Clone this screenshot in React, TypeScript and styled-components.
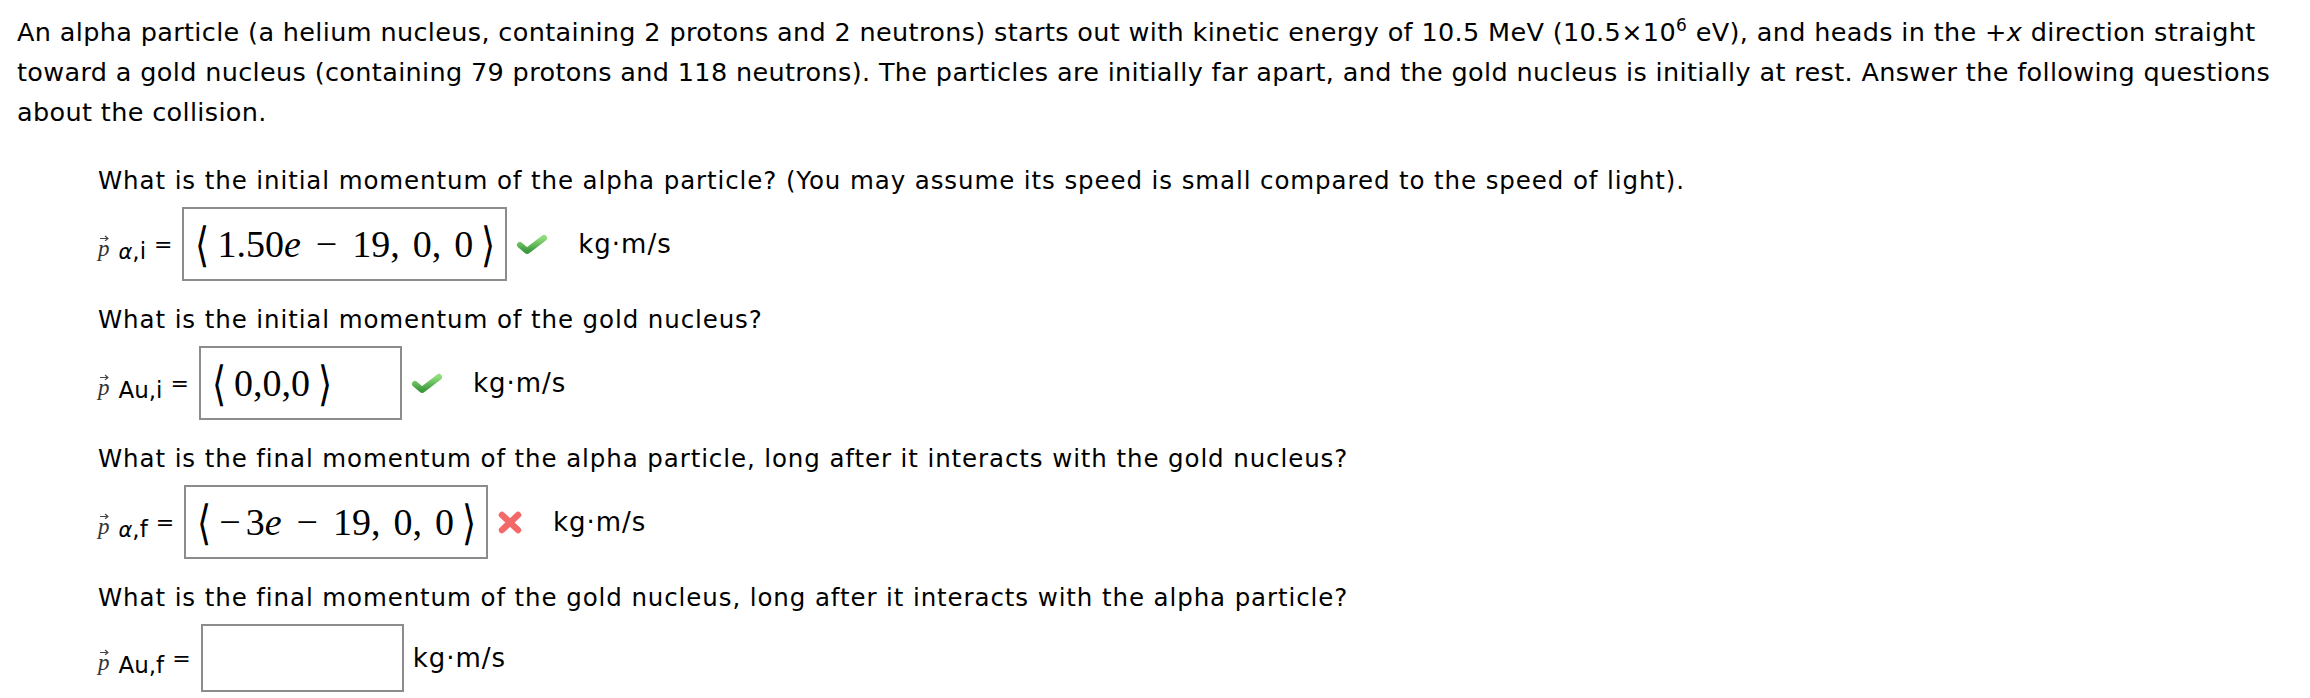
import React from "react";
import styled, { createGlobalStyle } from "styled-components";

const GlobalStyle = createGlobalStyle`
  html, body {
    margin: 0;
    padding: 0;
    background: #ffffff;
  }
  body {
    font-family: "DejaVu Sans", Verdana, sans-serif;
    font-size: 24.5px;
    color: #000000;
  }
`;

const Page = styled.div`
  padding: 12px 8px 0 17px;
`;

const Intro = styled.p`
  margin: 0;
  font-size: 25.5px;
  letter-spacing: 0.35px;
  line-height: 40px;
`;

const Sup = styled.sup`
  font-size: 17px;
  vertical-align: 10px;
  line-height: 0;
`;

const Italic = styled.i`
  font-style: italic;
`;

const Questions = styled.div`
  margin: 29px 0 0 81px;
  display: flex;
  flex-direction: column;
`;

const Question = styled.section`
  display: flex;
  flex-direction: column;
  margin-bottom: 19px;
`;

const Prompt = styled.div`
  font-size: 24.5px;
  letter-spacing: 0.9px;
  line-height: 40px;
`;

const Row = styled.div`
  display: flex;
  align-items: center;
  margin-top: 6px;
`;

const Label = styled.span`
  display: inline-flex;
  align-items: center;
  white-space: nowrap;
`;

const VecSymbol = styled.span`
  display: inline-flex;
  flex-direction: column;
  align-items: center;
  font-family: "Liberation Serif", serif;
  font-style: italic;
  font-size: 23px;
  line-height: 15px;
  color: #333;
  margin-top: 2px;
`;

const Sub = styled.span`
  margin-left: 9px;
  margin-top: 14px;
  font-size: 23px;
  letter-spacing: 0;
  line-height: 26px;
`;

const Greek = styled.span`
  font-style: italic;
  font-size: 21px;
`;

const Equals = styled.span`
  margin-left: 8px;
  font-size: 22px;
`;

const AnswerBox = styled.div<{ $h: number }>`
  box-sizing: border-box;
  margin-left: 10px;
  min-width: 203px;
  height: ${(p) => p.$h}px;
  border: 2px solid #8c8c8c;
  padding: 0 10px 0 11px;
  display: flex;
  align-items: center;
  background: #ffffff;
`;

const MathText = styled.span`
  font-family: "Liberation Serif", "DejaVu Serif", serif;
  font-size: 38px;
  white-space: nowrap;
  display: inline-flex;
  align-items: center;
`;

const Bracket = styled.span<{ $side: "l" | "r" }>`
  font-family: "DejaVu Sans", serif;
  font-weight: 200;
  font-size: 36px;
  transform: scaleY(1.3);
  margin: ${(p) => (p.$side === "l" ? "0 8px 0 0" : "0 0 0 8px")};
`;

const Var = styled.span`
  font-style: italic;
`;

const BinOp = styled.span`
  margin: 0 15px;
`;

const Neg = styled.span`
  margin: 0 5px 0 0;
`;

const Sep = styled.span<{ $space?: boolean }>`
  margin-right: ${(p) => (p.$space ? 13 : 0)}px;
`;

const StatusIcon = styled.span`
  display: inline-flex;
  margin-left: 9px;
`;

const Unit = styled.span<{ $gap: number }>`
  margin-left: ${(p) => p.$gap}px;
  font-size: 26px;
  letter-spacing: 1px;
  white-space: nowrap;
`;

const Check = () => (
  <svg width="32" height="22" viewBox="0 0 32 22">
    <defs>
      <linearGradient id="chk" x1="0" y1="0" x2="0" y2="1">
        <stop offset="0" stopColor="#8fdc7c" />
        <stop offset="1" stopColor="#3d9a3d" />
      </linearGradient>
    </defs>
    <path
      d="M4 12 L11 18 L28 5"
      fill="none"
      stroke="url(#chk)"
      strokeWidth="6"
      strokeLinecap="round"
      strokeLinejoin="round"
    />
  </svg>
);

const Cross = () => (
  <svg width="26" height="25" viewBox="0 0 26 25">
    <path
      d="M5 5 L21 20 M21 5 L5 20"
      fill="none"
      stroke="#f25c5c"
      strokeWidth="6.5"
      strokeLinecap="round"
      opacity="0.92"
    />
  </svg>
);

const Vec = ({ sub }: { sub: React.ReactNode }) => (
  <Label>
    <VecSymbol>
      <svg width="10" height="7" viewBox="0 0 10 7">
        <path d="M1 4.5 L8.5 4.5 M6 2 L9 4.5 L6 7" fill="none" stroke="#444" strokeWidth="1.1" />
      </svg>
      p
    </VecSymbol>
    <Sub>{sub}</Sub>
    <Equals>=</Equals>
  </Label>
);

export default function App() {
  return (
    <>
      <GlobalStyle />
      <Page>
        <Intro>
          An alpha particle (a helium nucleus, containing 2 protons and 2 neutrons) starts out with kinetic
          energy of 10.5 MeV (10.5×10<Sup>6</Sup> eV), and heads in the +<Italic>x</Italic> direction straight
          toward a gold nucleus (containing 79 protons and 118 neutrons). The particles are initially far apart,
          and the gold nucleus is initially at rest. Answer the following questions about the collision.
        </Intro>
        <Questions>
          <Question>
            <Prompt>
              What is the initial momentum of the alpha particle? (You may assume its speed is small compared to
              the speed of light).
            </Prompt>
            <Row>
              <Vec
                sub={
                  <>
                    <Greek>α</Greek>,i
                  </>
                }
              />
              <AnswerBox $h={74}>
                <MathText>
                  <Bracket $side="l">⟨</Bracket>1.50<Var>e</Var>
                  <BinOp>−</BinOp>19<Sep $space>,</Sep>0<Sep $space>,</Sep>0
                  <Bracket $side="r">⟩</Bracket>
                </MathText>
              </AnswerBox>
              <StatusIcon>
                <Check />
              </StatusIcon>
              <Unit $gap={30}>kg·m/s</Unit>
            </Row>
          </Question>

          <Question>
            <Prompt>What is the initial momentum of the gold nucleus?</Prompt>
            <Row>
              <Vec sub="Au,i" />
              <AnswerBox $h={74}>
                <MathText>
                  <Bracket $side="l">⟨</Bracket>0<Sep>,</Sep>0<Sep>,</Sep>0
                  <Bracket $side="r">⟩</Bracket>
                </MathText>
              </AnswerBox>
              <StatusIcon>
                <Check />
              </StatusIcon>
              <Unit $gap={30}>kg·m/s</Unit>
            </Row>
          </Question>

          <Question>
            <Prompt>What is the final momentum of the alpha particle, long after it interacts with the gold nucleus?</Prompt>
            <Row>
              <Vec
                sub={
                  <>
                    <Greek>α</Greek>,f
                  </>
                }
              />
              <AnswerBox $h={74}>
                <MathText>
                  <Bracket $side="l">⟨</Bracket>
                  <Neg>−</Neg>3<Var>e</Var>
                  <BinOp>−</BinOp>19<Sep $space>,</Sep>0<Sep $space>,</Sep>0
                  <Bracket $side="r">⟩</Bracket>
                </MathText>
              </AnswerBox>
              <StatusIcon>
                <Cross />
              </StatusIcon>
              <Unit $gap={30}>kg·m/s</Unit>
            </Row>
          </Question>

          <Question>
            <Prompt>What is the final momentum of the gold nucleus, long after it interacts with the alpha particle?</Prompt>
            <Row>
              <Vec sub="Au,f" />
              <AnswerBox $h={68} />
              <Unit $gap={9}>kg·m/s</Unit>
            </Row>
          </Question>
        </Questions>
      </Page>
    </>
  );
}
